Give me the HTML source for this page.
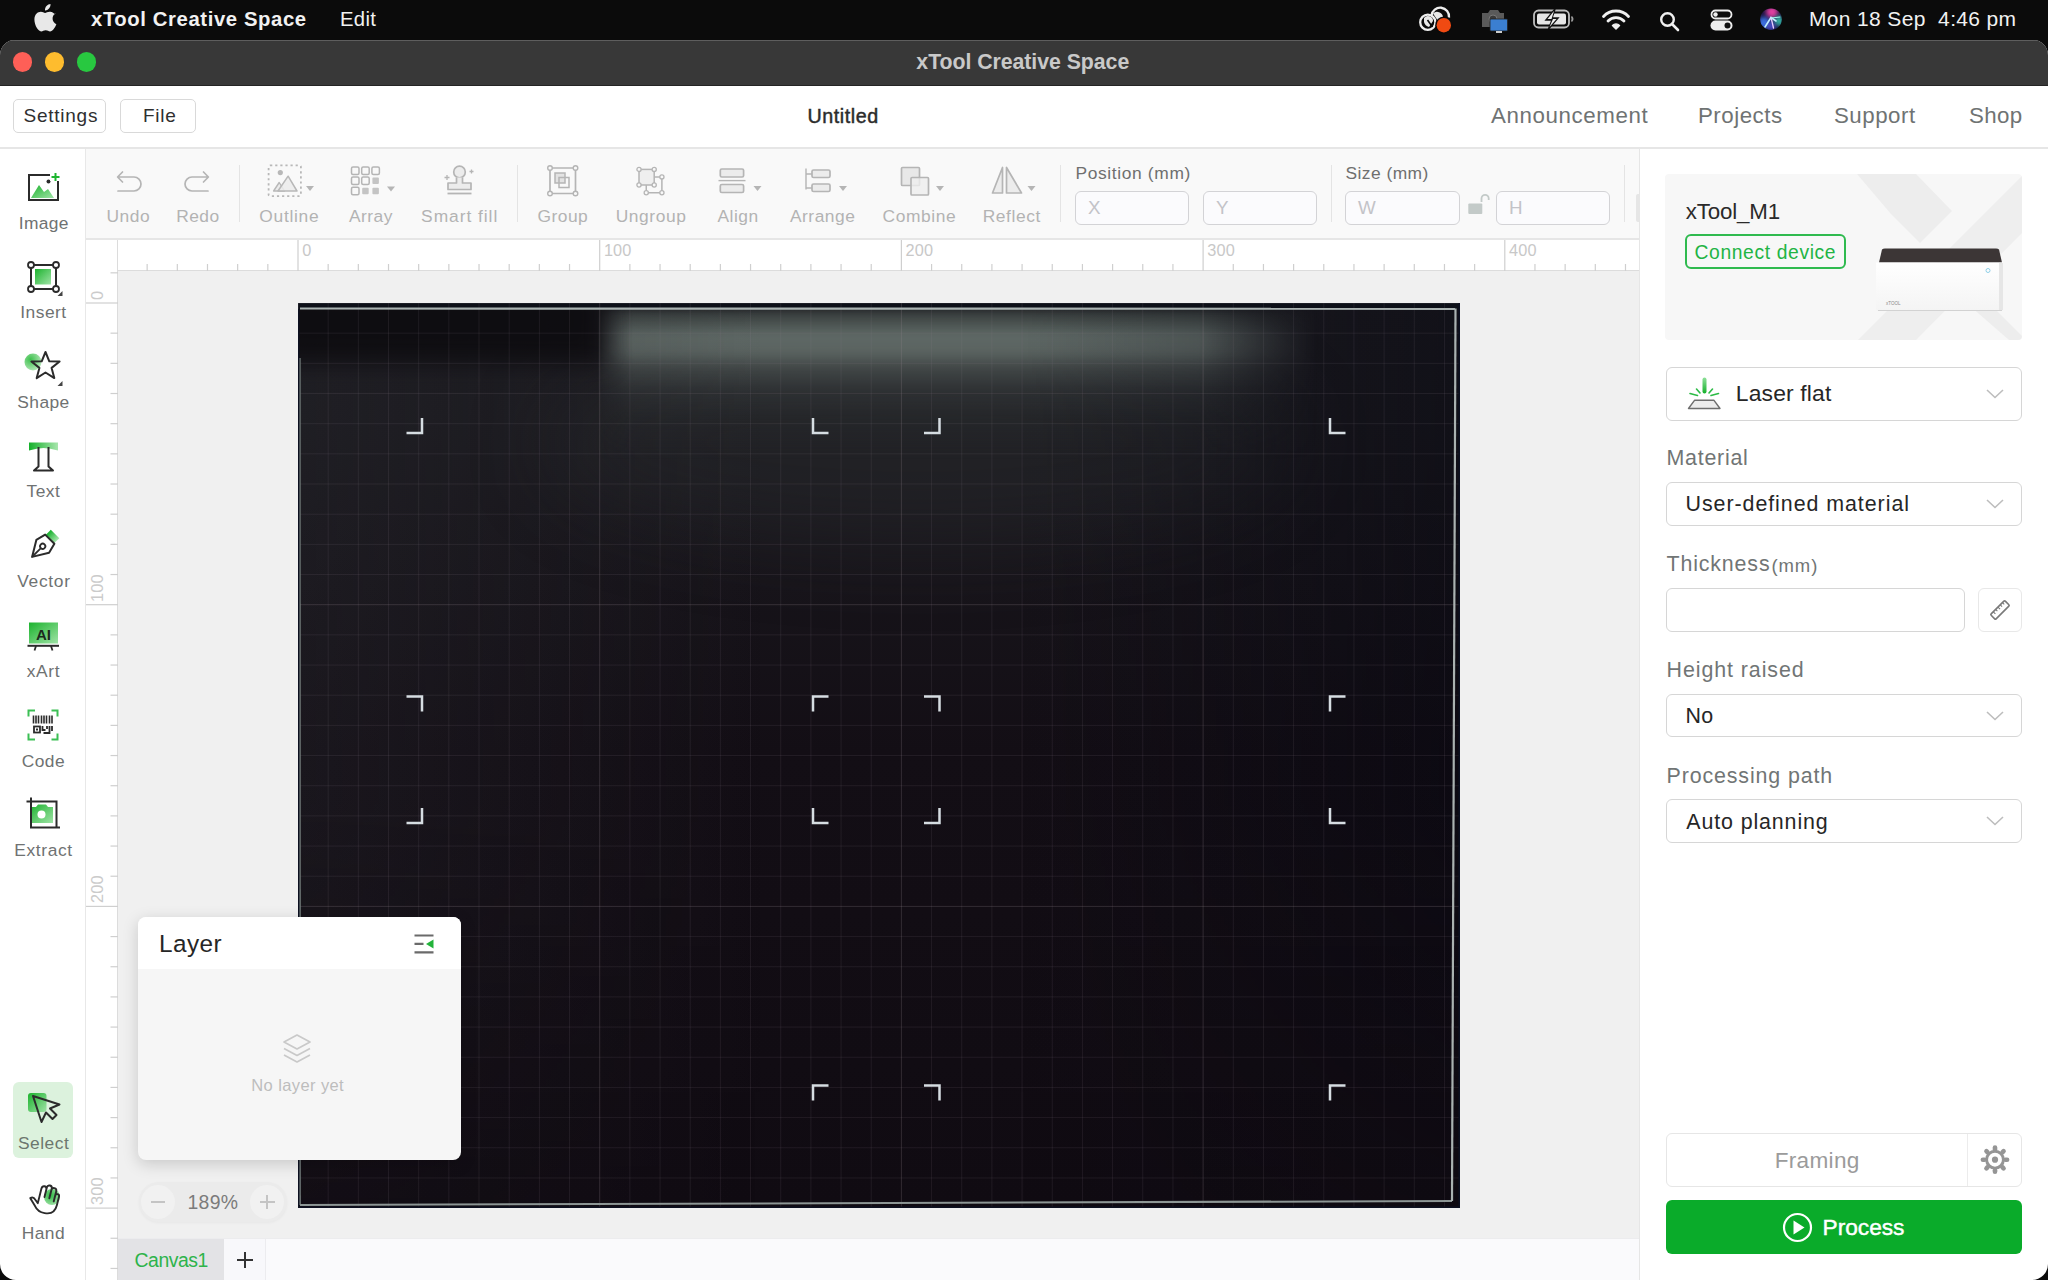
<!DOCTYPE html><html><head><meta charset="utf-8"><style>
html,body{margin:0;padding:0;}
body{width:2048px;height:1280px;overflow:hidden;position:relative;background:#0b0b0b;font-family:"Liberation Sans",sans-serif;}
.t{position:absolute;line-height:1;white-space:nowrap;font-family:"Liberation Sans",sans-serif;}
svg{overflow:visible}
</style></head><body>
<div style="position:absolute;left:0px;top:0px;width:2048px;height:40px;background:#0b0b0b"></div>
<svg style="position:absolute;left:34px;top:4px;" width="22" height="27" viewBox="0 0 22 27"><path fill="#e8e8e8" d="M15.5 0c.2 1.8-.5 3.4-1.5 4.5-1 1.2-2.6 2-4 1.9-.2-1.7.6-3.4 1.5-4.4C12.5.9 14.2.1 15.5 0zM20.6 9.3c-.1.1-3 1.7-3 5.3 0 4.1 3.6 5.6 3.7 5.6 0 .1-.6 2-1.9 3.9-1.1 1.6-2.3 3.3-4.2 3.3s-2.3-1.1-4.5-1.1c-2.1 0-2.8 1.1-4.5 1.1-1.8 0-3.1-1.7-4.3-3.4C.5 21.9-.6 18.6-.6 15.5c0-5 3.3-7.700 6.500-7.700 1.700 0 3.100 1.100 4.200 1.100 1 0 2.600-1.200 4.600-1.200.700 0 3.400.100 5.100 2.600z" transform="translate(1,0)"/></svg>
<div class="t" style="left:91.0px;top:9.2px;font-size:20.3px;color:#f2f2f2;font-weight:bold;letter-spacing:0.6px;">xTool Creative Space</div>
<div class="t" style="left:340.0px;top:9.2px;font-size:20.3px;color:#f2f2f2;font-weight:normal;letter-spacing:0.3px;">Edit</div>
<div class="t" style="left:1809.0px;top:7.5px;font-size:21px;color:#f2f2f2;font-weight:normal;letter-spacing:0.35px;">Mon 18 Sep&nbsp;&nbsp;4:46 pm</div>
<div style="position:absolute;left:0;top:40px;width:2048px;height:1240px;border-radius:15px;overflow:hidden;background:#fff">
<div style="position:absolute;left:0px;top:0px;width:2048px;height:46px;background:#383838;box-shadow:inset 0 1px 0 #5e5e5e"></div>
<div style="position:absolute;left:0px;top:45px;width:2048px;height:1px;background:#242424"></div>
</div>
<div style="position:absolute;left:12.6px;top:52.3px;width:19.4px;height:19.4px;border-radius:50%;background:#fe5f57"></div>
<div style="position:absolute;left:44.6px;top:52.3px;width:19.4px;height:19.4px;border-radius:50%;background:#febc2e"></div>
<div style="position:absolute;left:76.6px;top:52.3px;width:19.4px;height:19.4px;border-radius:50%;background:#28c840"></div>
<div class="t" style="left:822.8px;width:400px;text-align:center;top:52.4px;font-size:21.3px;color:#c9c9c9;font-weight:bold;letter-spacing:-0.05px;text-indent:-0.05px;">xTool Creative Space</div>
<div style="position:absolute;left:13px;top:99px;width:93px;height:34px;box-sizing:border-box;border:1px solid #d9d9d9;border-radius:5px;background:#fff"></div>
<div class="t" style="left:23.5px;top:105.8px;font-size:19px;color:#2f2f2f;font-weight:normal;letter-spacing:0.75px;">Settings</div>
<div style="position:absolute;left:120px;top:99px;width:76px;height:34px;box-sizing:border-box;border:1px solid #d9d9d9;border-radius:5px;background:#fff"></div>
<div class="t" style="left:143.0px;top:105.8px;font-size:19px;color:#2f2f2f;font-weight:normal;letter-spacing:0.75px;">File</div>
<div class="t" style="left:807.5px;top:106.6px;font-size:19.7px;color:#2b2b2b;font-weight:normal;letter-spacing:0.55px;-webkit-text-stroke:0.45px #2b2b2b;">Untitled</div>
<div class="t" style="left:1491.0px;top:105.0px;font-size:22.3px;color:#6f7373;font-weight:normal;letter-spacing:0.6px;">Announcement</div>
<div class="t" style="left:1698.0px;top:105.0px;font-size:22.3px;color:#6f7373;font-weight:normal;letter-spacing:0.5px;">Projects</div>
<div class="t" style="left:1834.0px;top:105.0px;font-size:22.3px;color:#6f7373;font-weight:normal;letter-spacing:0.5px;">Support</div>
<div class="t" style="left:1969.0px;top:105.0px;font-size:22.3px;color:#6f7373;font-weight:normal;letter-spacing:0.4px;">Shop</div>
<div style="position:absolute;left:0px;top:147px;width:2048px;height:2px;background:#e6e6e6"></div>
<div style="position:absolute;left:0px;top:149px;width:85px;height:1131px;background:#fff"></div>
<div style="position:absolute;left:85px;top:149px;width:1px;height:1131px;background:#e8e8e8"></div>
<div style="position:absolute;left:13px;top:1082px;width:60px;height:76px;background:#dcf2dd;border-radius:6px"></div>
<div class="t" style="left:3.6px;width:80px;text-align:center;top:214.5px;font-size:17.4px;color:#6f7272;font-weight:normal;letter-spacing:0.35px;text-indent:0.35px;">Image</div>
<div class="t" style="left:3.2px;width:80px;text-align:center;top:304.1px;font-size:17.4px;color:#6f7272;font-weight:normal;letter-spacing:0.5px;text-indent:0.5px;">Insert</div>
<div class="t" style="left:3.3px;width:80px;text-align:center;top:393.9px;font-size:17.4px;color:#6f7272;font-weight:normal;letter-spacing:0.4px;text-indent:0.4px;">Shape</div>
<div class="t" style="left:3.2px;width:80px;text-align:center;top:483.2px;font-size:17.4px;color:#6f7272;font-weight:normal;letter-spacing:0.5px;text-indent:0.5px;">Text</div>
<div class="t" style="left:3.6px;width:80px;text-align:center;top:573.2px;font-size:17.4px;color:#6f7272;font-weight:normal;letter-spacing:0.7px;text-indent:0.7px;">Vector</div>
<div class="t" style="left:3.2px;width:80px;text-align:center;top:662.5px;font-size:17.4px;color:#6f7272;font-weight:normal;letter-spacing:0.6px;text-indent:0.6px;">xArt</div>
<div class="t" style="left:3.2px;width:80px;text-align:center;top:752.5px;font-size:17.4px;color:#6f7272;font-weight:normal;letter-spacing:0.5px;text-indent:0.5px;">Code</div>
<div class="t" style="left:3.2px;width:80px;text-align:center;top:841.8px;font-size:17.4px;color:#6f7272;font-weight:normal;letter-spacing:0.6px;text-indent:0.6px;">Extract</div>
<div class="t" style="left:3.3px;width:80px;text-align:center;top:1134.5px;font-size:17.4px;color:#6c776e;font-weight:normal;letter-spacing:0.5px;text-indent:0.5px;">Select</div>
<div class="t" style="left:3.2px;width:80px;text-align:center;top:1224.5px;font-size:17.4px;color:#6f7272;font-weight:normal;letter-spacing:0.4px;text-indent:0.4px;">Hand</div>
<svg style="position:absolute;left:25px;top:170px;" width="40" height="34" viewBox="0 0 40 34"><defs><linearGradient id="g1" x1="0" y1="0" x2="1" y2="1"><stop offset="0" stop-color="#1cb32e"/><stop offset="1" stop-color="#9fe3a6"/></linearGradient><linearGradient id="g2" x1="0" y1="0" x2="1" y2="0"><stop offset="0" stop-color="#14b02a"/><stop offset="1" stop-color="#a8e6ad"/></linearGradient></defs><path d="M6 28 L14 15 L19 22 L23 19 L29 28 Z" fill="url(#g1)"/><rect x="4" y="5" width="29" height="25" fill="none" stroke="#2b2b2b" stroke-width="2"/><circle cx="23.5" cy="11.5" r="2" fill="#2b2b2b"/><rect x="25" y="1" width="12" height="10" fill="#fff"/><path d="M30.5 3v8M26.5 7h8" stroke="#1db52f" stroke-width="2"/></svg>
<svg style="position:absolute;left:25px;top:259px;" width="40" height="40" viewBox="0 0 40 40"><defs><linearGradient id="g1" x1="0" y1="0" x2="1" y2="1"><stop offset="0" stop-color="#1cb32e"/><stop offset="1" stop-color="#9fe3a6"/></linearGradient><linearGradient id="g2" x1="0" y1="0" x2="1" y2="0"><stop offset="0" stop-color="#14b02a"/><stop offset="1" stop-color="#a8e6ad"/></linearGradient></defs><rect x="10" y="10" width="16" height="15.5" fill="url(#g1)"/><rect x="6" y="6" width="25" height="24" fill="none" stroke="#2b2b2b" stroke-width="2"/><circle cx="6" cy="6" r="3" fill="#fff" stroke="#2b2b2b" stroke-width="1.8"/><circle cx="31" cy="6" r="3" fill="#fff" stroke="#2b2b2b" stroke-width="1.8"/><circle cx="6" cy="30" r="3" fill="#fff" stroke="#2b2b2b" stroke-width="1.8"/><circle cx="31" cy="30" r="3" fill="#fff" stroke="#2b2b2b" stroke-width="1.8"/><path d="M37.5 32 L37.5 37 L32.5 37 Z" fill="#444"/></svg>
<svg style="position:absolute;left:22px;top:348px;" width="44" height="40" viewBox="0 0 44 40"><defs><radialGradient id="g3" cx="0.35" cy="0.35" r="0.7"><stop offset="0" stop-color="#3cc04c"/><stop offset="1" stop-color="#b5e8b9"/></radialGradient></defs><circle cx="11" cy="14" r="8.5" fill="url(#g3)"/><path d="M23.5 4 L27.3 13.3 L37.6 13.5 L29.6 19.9 L32.3 30.1 L23.5 24.5 L14.7 30.1 L17.4 19.9 L9.4 13.5 L19.7 13.3 Z" fill="none" stroke="#2b2b2b" stroke-width="2" stroke-linejoin="round"/><path d="M40.5 33 L40.5 38 L35.5 38 Z" fill="#444"/></svg>
<svg style="position:absolute;left:26px;top:440px;" width="34" height="34" viewBox="0 0 34 34"><defs><linearGradient id="g1" x1="0" y1="0" x2="1" y2="1"><stop offset="0" stop-color="#1cb32e"/><stop offset="1" stop-color="#9fe3a6"/></linearGradient><linearGradient id="g2" x1="0" y1="0" x2="1" y2="0"><stop offset="0" stop-color="#14b02a"/><stop offset="1" stop-color="#a8e6ad"/></linearGradient></defs><path d="M3 2.5 H32 V10.5 Q24 8 17.5 8 Q11 8 3 10.5 Z" fill="url(#g2)"/><path d="M12.5 7 V26.5 L8 30.5 H27 L22.5 26.5 V7" fill="none" stroke="#2b2b2b" stroke-width="2" stroke-linejoin="round"/></svg>
<svg style="position:absolute;left:24.5px;top:529.5px;" width="34" height="34" viewBox="0 0 34 34"><defs><linearGradient id="g1" x1="0" y1="0" x2="1" y2="1"><stop offset="0" stop-color="#1cb32e"/><stop offset="1" stop-color="#9fe3a6"/></linearGradient><linearGradient id="g2" x1="0" y1="0" x2="1" y2="0"><stop offset="0" stop-color="#14b02a"/><stop offset="1" stop-color="#a8e6ad"/></linearGradient></defs><g transform="rotate(45 17 17)"><rect x="11" y="-1.5" width="12" height="7" fill="url(#g2)"/><path d="M10.5 6 L23.5 6 L26 16 L17 31 L8 16 Z" fill="none" stroke="#2b2b2b" stroke-width="2" stroke-linejoin="round"/><circle cx="17" cy="16" r="2.6" fill="#fff" stroke="#2b2b2b" stroke-width="1.8"/><path d="M17 18.6 V31" stroke="#2b2b2b" stroke-width="1.8"/></g></svg>
<svg style="position:absolute;left:26px;top:620px;" width="36" height="34" viewBox="0 0 36 34"><defs><linearGradient id="g1" x1="0" y1="0" x2="1" y2="1"><stop offset="0" stop-color="#1cb32e"/><stop offset="1" stop-color="#9fe3a6"/></linearGradient><linearGradient id="g2" x1="0" y1="0" x2="1" y2="0"><stop offset="0" stop-color="#14b02a"/><stop offset="1" stop-color="#a8e6ad"/></linearGradient></defs><rect x="3" y="2.5" width="29" height="21" fill="url(#g1)"/><text x="17.5" y="19.5" text-anchor="middle" font-family="Liberation Sans" font-weight="bold" font-size="15" fill="#1d2a1d">AI</text><path d="M1.5 25.8 H33" stroke="#2b2b2b" stroke-width="2"/><path d="M10 26 L8.5 30.5 M25 26 L26.5 30.5" stroke="#2b2b2b" stroke-width="1.8"/></svg>
<svg style="position:absolute;left:26px;top:708px;" width="34" height="34" viewBox="0 0 34 34"><path d="M2.5 8.5 V2.5 H9 M25.5 2.5 H31.5 V8.5 M31.5 25.5 V31.5 H25.5 M9 31.5 H2.5 V25.5" fill="none" stroke="#3cbf55" stroke-width="2"/><path d="M7.5 7.5 V15.5 M10 7.5 V15.5 M12.5 7.5 V15.5 M15.5 7.5 V15.5 M18 7.5 V15.5 M20.5 7.5 V15.5 M23.5 7.5 V15.5 M26 7.5 V15.5" stroke="#2b2b2b" stroke-width="1.6"/><rect x="8" y="18.5" width="6" height="6" fill="none" stroke="#2b2b2b" stroke-width="1.8"/><rect x="10" y="20.5" width="2" height="2" fill="#2b2b2b"/><path d="M16.5 18 V22 H19.5 M21 18 V21 M23.5 18 V25 H17.5 M26 18 V23" fill="none" stroke="#2b2b2b" stroke-width="1.8"/></svg>
<svg style="position:absolute;left:24px;top:795px;" width="38" height="38" viewBox="0 0 38 38"><defs><linearGradient id="g1" x1="0" y1="0" x2="1" y2="1"><stop offset="0" stop-color="#1cb32e"/><stop offset="1" stop-color="#9fe3a6"/></linearGradient><linearGradient id="g2" x1="0" y1="0" x2="1" y2="0"><stop offset="0" stop-color="#14b02a"/><stop offset="1" stop-color="#a8e6ad"/></linearGradient></defs><path d="M6 12 H12 L14 9.5 H22 L24 12 H29 V28 H6 Z" fill="url(#g1)"/><circle cx="17.5" cy="19.5" r="4" fill="#fff"/><path d="M2.5 6.5 H32.5 V31.5 M7 2.5 V32.5 H36" fill="none" stroke="#2b2b2b" stroke-width="2"/></svg>
<svg style="position:absolute;left:26px;top:1091px;" width="38" height="36" viewBox="0 0 38 36"><defs><linearGradient id="g1" x1="0" y1="0" x2="1" y2="1"><stop offset="0" stop-color="#1cb32e"/><stop offset="1" stop-color="#9fe3a6"/></linearGradient><linearGradient id="g2" x1="0" y1="0" x2="1" y2="0"><stop offset="0" stop-color="#14b02a"/><stop offset="1" stop-color="#a8e6ad"/></linearGradient></defs><rect x="2" y="2" width="18.5" height="19" rx="3" fill="url(#g1)"/><path d="M7 5 L33.5 13.5 L24 17.5 L30.5 24 L26.5 28 L20 21.5 L15.5 31 Z" fill="none" stroke="#2b2b2b" stroke-width="2" stroke-linejoin="round"/></svg>
<svg style="position:absolute;left:26px;top:1181.5px;" width="36" height="34" viewBox="0 0 36 34"><defs><radialGradient id="g4" cx="0.4" cy="0.4" r="0.7"><stop offset="0" stop-color="#2fbb44"/><stop offset="1" stop-color="#a9e4ae"/></radialGradient></defs><circle cx="26" cy="15" r="8" fill="url(#g4)"/><path transform="rotate(14 18 17)" d="M4.5 19.5 Q7 17 10 20 L13 22.5 V7.5 Q13 4.5 15.5 4.5 Q18 4.5 18 7.5 V15 V5 Q18 2.5 20.5 2.5 Q23 2.5 23 5 V15 V6.5 Q23 4 25.5 4 Q28 4 28 6.5 V17 V11 Q28 9 30 9 Q32 9 32 11 V20 Q32 30 22 30.5 Q15 31 11 26 Z" fill="none" stroke="#2b2b2b" stroke-width="1.9" stroke-linejoin="round"/></svg>
<div style="position:absolute;left:86px;top:149px;width:1553px;height:90px;background:#f9f9f9"></div>
<div style="position:absolute;left:86px;top:238px;width:1553px;height:2px;background:#e6e6e6"></div>
<div class="t" style="left:68.1px;width:120px;text-align:center;top:208.2px;font-size:17.4px;color:#b3b3b3;font-weight:normal;letter-spacing:0.6px;text-indent:0.6px;">Undo</div>
<div class="t" style="left:137.7px;width:120px;text-align:center;top:208.2px;font-size:17.4px;color:#b3b3b3;font-weight:normal;letter-spacing:0.5px;text-indent:0.5px;">Redo</div>
<div class="t" style="left:229.0px;width:120px;text-align:center;top:208.2px;font-size:17.4px;color:#b3b3b3;font-weight:normal;letter-spacing:0.7px;text-indent:0.7px;">Outline</div>
<div class="t" style="left:310.7px;width:120px;text-align:center;top:208.2px;font-size:17.4px;color:#b3b3b3;font-weight:normal;letter-spacing:0.5px;text-indent:0.5px;">Array</div>
<div class="t" style="left:399.2px;width:120px;text-align:center;top:208.2px;font-size:17.4px;color:#b3b3b3;font-weight:normal;letter-spacing:0.95px;text-indent:0.95px;">Smart fill</div>
<div class="t" style="left:502.6px;width:120px;text-align:center;top:208.2px;font-size:17.4px;color:#b3b3b3;font-weight:normal;letter-spacing:0.5px;text-indent:0.5px;">Group</div>
<div class="t" style="left:590.8px;width:120px;text-align:center;top:208.2px;font-size:17.4px;color:#b3b3b3;font-weight:normal;letter-spacing:0.6px;text-indent:0.6px;">Ungroup</div>
<div class="t" style="left:677.8px;width:120px;text-align:center;top:208.2px;font-size:17.4px;color:#b3b3b3;font-weight:normal;letter-spacing:0.5px;text-indent:0.5px;">Align</div>
<div class="t" style="left:762.4px;width:120px;text-align:center;top:208.2px;font-size:17.4px;color:#b3b3b3;font-weight:normal;letter-spacing:0.5px;text-indent:0.5px;">Arrange</div>
<div class="t" style="left:859.1px;width:120px;text-align:center;top:208.2px;font-size:17.4px;color:#b3b3b3;font-weight:normal;letter-spacing:0.6px;text-indent:0.6px;">Combine</div>
<div class="t" style="left:951.5px;width:120px;text-align:center;top:208.2px;font-size:17.4px;color:#b3b3b3;font-weight:normal;letter-spacing:0.6px;text-indent:0.6px;">Reflect</div>
<div style="position:absolute;left:239px;top:165px;width:1px;height:57px;background:#e4e4e4"></div>
<div style="position:absolute;left:517px;top:165px;width:1px;height:57px;background:#e4e4e4"></div>
<div style="position:absolute;left:1060px;top:165px;width:1px;height:57px;background:#e4e4e4"></div>
<div style="position:absolute;left:1331px;top:165px;width:1px;height:57px;background:#e4e4e4"></div>
<div style="position:absolute;left:1624px;top:165px;width:1px;height:57px;background:#e4e4e4"></div>
<svg style="position:absolute;left:114px;top:166px;" width="32" height="30" viewBox="0 0 32 30"><path d="M4 11 H20 A7 7 0 0 1 20 25 H4 M8.5 6 L3.6 11 L8.5 16" fill="none" stroke="#b5b5b5" stroke-width="1.7" stroke-linecap="round" stroke-linejoin="round"/></svg>
<svg style="position:absolute;left:182px;top:166px;" width="32" height="30" viewBox="0 0 32 30"><path d="M26 11 H10 A7 7 0 0 0 10 25 H26 M21.5 6 L26.4 11 L21.5 16" fill="none" stroke="#b5b5b5" stroke-width="1.7" stroke-linecap="round" stroke-linejoin="round"/></svg>
<svg style="position:absolute;left:264px;top:161px;" width="54" height="40" viewBox="0 0 54 40"><rect x="4.6" y="4.4" width="32.3" height="30.8" rx="1.5" fill="none" stroke="#b8b8b8" stroke-width="1.8" stroke-dasharray="2.2 2.9"/><circle cx="16.3" cy="11.6" r="2.6" fill="#b8b8b8"/><path d="M9.6 30 L15.2 21.5 L20.5 30 Z" fill="#ececec" stroke="#b8b8b8" stroke-width="1.4" stroke-linejoin="round"/><path d="M14 30 L24.1 15.2 L33 30 Z" fill="#ececec" fill-opacity="0.85" stroke="#b8b8b8" stroke-width="1.5" stroke-linejoin="round"/><path d="M42 25 h8 l-4 5 z" fill="#b5b5b5"/></svg>
<svg style="position:absolute;left:346px;top:162px;" width="54" height="38" viewBox="0 0 54 38"><rect x="5.5" y="5.0" width="7.5" height="7.5" rx="1.5" fill="none" stroke="#b5b5b5" stroke-width="1.5"/><rect x="5.5" y="15.1" width="7.5" height="7.5" rx="1.5" fill="none" stroke="#b5b5b5" stroke-width="1.5"/><rect x="5.5" y="25.2" width="7.5" height="7.5" rx="1.5" fill="none" stroke="#b5b5b5" stroke-width="1.5"/><rect x="15.7" y="5.0" width="7.5" height="7.5" rx="1.5" fill="none" stroke="#b5b5b5" stroke-width="1.5"/><rect x="15.7" y="15.1" width="7.5" height="7.5" rx="1.5" fill="none" stroke="#b5b5b5" stroke-width="1.5"/><rect x="16.2" y="25.7" width="6.5" height="6.5" rx="1" fill="#c4c4c4"/><rect x="25.9" y="5.0" width="7.5" height="7.5" rx="1.5" fill="none" stroke="#b5b5b5" stroke-width="1.5"/><rect x="26.4" y="15.6" width="6.5" height="6.5" rx="1" fill="#c4c4c4"/><rect x="26.4" y="25.7" width="6.5" height="6.5" rx="1" fill="#c4c4c4"/><path d="M41 24.5 h8 l-4 5 z" fill="#b5b5b5"/></svg>
<svg style="position:absolute;left:440px;top:162px;" width="40" height="38" viewBox="0 0 40 38"><circle cx="19.5" cy="10" r="5.8" fill="#ececec" stroke="#b5b5b5" stroke-width="1.7"/><path d="M16.5 15.5 V21 H8 V27.5 H31 V21 H22.5 V15.5" fill="#ececec" stroke="#b5b5b5" stroke-width="1.7" stroke-linejoin="round"/><path d="M7.5 31.5 H31.5" stroke="#b5b5b5" stroke-width="1.8"/><path d="M7 13 v5 M4.5 15.5 h5 M31.5 7.5 v4 M29.5 9.5 h4" stroke="#b5b5b5" stroke-width="1.3"/></svg>
<svg style="position:absolute;left:544px;top:162px;" width="38" height="38" viewBox="0 0 38 38"><rect x="6" y="6" width="25.5" height="25.5" fill="none" stroke="#b5b5b5" stroke-width="1.7" stroke-linecap="round" stroke-linejoin="round" stroke-width="1.5"/><rect x="11" y="11" width="10" height="10" fill="#e3e3e3" stroke="#b5b5b5" stroke-width="1.5"/><rect x="15" y="15.5" width="10" height="10" fill="none" stroke="#b5b5b5" stroke-width="1.5"/><circle cx="6" cy="6" r="2.3" fill="#f9f9f9" stroke="#b5b5b5" stroke-width="1.4"/><circle cx="6" cy="31.5" r="2.3" fill="#f9f9f9" stroke="#b5b5b5" stroke-width="1.4"/><circle cx="31.5" cy="6" r="2.3" fill="#f9f9f9" stroke="#b5b5b5" stroke-width="1.4"/><circle cx="31.5" cy="31.5" r="2.3" fill="#f9f9f9" stroke="#b5b5b5" stroke-width="1.4"/></svg>
<svg style="position:absolute;left:633px;top:163px;" width="36" height="36" viewBox="0 0 36 36"><rect x="6" y="6.4" width="15.2" height="15.6" fill="#efefef" stroke="#b5b5b5" stroke-width="1.5"/><path d="M21.2 13.9 H28.9 V29.7 H13.25 V22" fill="none" stroke="#b5b5b5" stroke-width="1.5"/><circle cx="6" cy="6.4" r="2.1" fill="#f9f9f9" stroke="#b5b5b5" stroke-width="1.3"/><circle cx="21.2" cy="6.4" r="2.1" fill="#f9f9f9" stroke="#b5b5b5" stroke-width="1.3"/><circle cx="6" cy="22" r="2.1" fill="#f9f9f9" stroke="#b5b5b5" stroke-width="1.3"/><circle cx="21.2" cy="22" r="2.1" fill="#f9f9f9" stroke="#b5b5b5" stroke-width="1.3"/><circle cx="28.9" cy="13.9" r="2.1" fill="#f9f9f9" stroke="#b5b5b5" stroke-width="1.3"/><circle cx="13.25" cy="29.7" r="2.1" fill="#f9f9f9" stroke="#b5b5b5" stroke-width="1.3"/><circle cx="28.9" cy="29.7" r="2.1" fill="#f9f9f9" stroke="#b5b5b5" stroke-width="1.3"/></svg>
<svg style="position:absolute;left:714px;top:163px;" width="52" height="34" viewBox="0 0 52 34"><rect x="6.3" y="6" width="23.3" height="8" rx="1.5" fill="#ececec" stroke="#b5b5b5" stroke-width="1.7"/><rect x="6.3" y="21.5" width="23.3" height="8" rx="1.5" fill="#ececec" stroke="#b5b5b5" stroke-width="1.7"/><path d="M4.5 17.6 H31.5" stroke="#b5b5b5" stroke-width="1.4"/><path d="M39.5 23 h8 l-4 5 z" fill="#b5b5b5"/></svg>
<svg style="position:absolute;left:801px;top:163px;" width="52" height="34" viewBox="0 0 52 34"><path d="M5 5.5 V26.5 M5 11 H11 M5 25 H11" fill="none" stroke="#b5b5b5" stroke-width="1.4"/><rect x="11" y="7" width="18" height="7.5" rx="1.5" fill="#ececec" stroke="#b5b5b5" stroke-width="1.7"/><rect x="11" y="21" width="18" height="7.5" rx="1.5" fill="#ececec" stroke="#b5b5b5" stroke-width="1.7"/><path d="M38 23 h8 l-4 5 z" fill="#b5b5b5"/></svg>
<svg style="position:absolute;left:896px;top:162px;" width="52" height="38" viewBox="0 0 52 38"><rect x="5.5" y="5.5" width="18" height="18" rx="1" fill="#e8e8e8" stroke="#b5b5b5" stroke-width="1.7"/><rect x="15" y="15.5" width="17.5" height="17.5" rx="1" fill="#ededed" fill-opacity="0.8" stroke="#b5b5b5" stroke-width="1.7"/><path d="M40 24 h8 l-4 5 z" fill="#b5b5b5"/></svg>
<svg style="position:absolute;left:987px;top:162px;" width="52" height="36" viewBox="0 0 52 36"><path d="M15.5 5.5 V31 H5.5 Z" fill="#ececec" stroke="#b5b5b5" stroke-width="1.7" stroke-linejoin="round"/><path d="M19.5 5.5 V31 H34.5 Z" fill="#ececec" stroke="#b5b5b5" stroke-width="1.7" stroke-linejoin="round"/><path d="M40.5 24 h8 l-4 5 z" fill="#b5b5b5"/></svg>
<div class="t" style="left:1075.5px;top:165.2px;font-size:17.4px;color:#6f6f6f;font-weight:normal;letter-spacing:0.63px;">Position (mm)</div>
<div class="t" style="left:1345.5px;top:165.2px;font-size:17.4px;color:#6f6f6f;font-weight:normal;letter-spacing:0.45px;">Size (mm)</div>
<div style="position:absolute;left:1075px;top:191px;width:114px;height:34px;box-sizing:border-box;border:1px solid #d3d3d6;border-radius:6px;background:#fbfbfd"></div>
<div class="t" style="left:1088.0px;top:199.0px;font-size:18.8px;color:#c3c3c8;font-weight:normal;letter-spacing:0px;">X</div>
<div style="position:absolute;left:1203px;top:191px;width:114px;height:34px;box-sizing:border-box;border:1px solid #d3d3d6;border-radius:6px;background:#fbfbfd"></div>
<div class="t" style="left:1216.0px;top:199.0px;font-size:18.8px;color:#c3c3c8;font-weight:normal;letter-spacing:0px;">Y</div>
<div style="position:absolute;left:1345px;top:191px;width:115px;height:34px;box-sizing:border-box;border:1px solid #d3d3d6;border-radius:6px;background:#fbfbfd"></div>
<div class="t" style="left:1358.0px;top:199.0px;font-size:18.8px;color:#c3c3c8;font-weight:normal;letter-spacing:0px;">W</div>
<div style="position:absolute;left:1496px;top:191px;width:114px;height:34px;box-sizing:border-box;border:1px solid #d3d3d6;border-radius:6px;background:#fbfbfd"></div>
<div class="t" style="left:1509.0px;top:199.0px;font-size:18.8px;color:#c3c3c8;font-weight:normal;letter-spacing:0px;">H</div>
<svg style="position:absolute;left:1466px;top:192px;" width="24" height="24" viewBox="0 0 24 24"><path d="M15.5 10 V6.5 A3.6 3.6 0 0 1 22.7 6.5 V8" fill="none" stroke="#c3cac8" stroke-width="1.8"/><rect x="2.3" y="11.5" width="14" height="10.5" rx="1" fill="#c3cac8"/></svg>
<div style="position:absolute;left:1636px;top:194px;width:3px;height:28px;background:#e6e6e6;border-radius:2px 0 0 2px"></div>
<div style="position:absolute;left:86px;top:240px;width:1553px;height:31px;background:#fff"></div>
<div style="position:absolute;left:86px;top:271px;width:32px;height:1009px;background:#fff"></div>
<div style="position:absolute;left:118px;top:270px;width:1521px;height:1px;background:#dcdcdc"></div>
<div style="position:absolute;left:117px;top:240px;width:1px;height:1040px;background:#dcdcdc"></div>
<svg style="position:absolute;left:0px;top:240px;" width="1639" height="31" viewBox="0 0 1639 31"><path d="M147.15 24 V31" stroke="#cfcfcf" stroke-width="1.2"/><path d="M177.32 24 V31" stroke="#cfcfcf" stroke-width="1.2"/><path d="M207.49 24 V31" stroke="#cfcfcf" stroke-width="1.2"/><path d="M237.66 24 V31" stroke="#cfcfcf" stroke-width="1.2"/><path d="M267.83 24 V31" stroke="#cfcfcf" stroke-width="1.2"/><path d="M298.00 0 V31" stroke="#cfcfcf" stroke-width="1.2"/><path d="M328.17 24 V31" stroke="#cfcfcf" stroke-width="1.2"/><path d="M358.34 24 V31" stroke="#cfcfcf" stroke-width="1.2"/><path d="M388.51 24 V31" stroke="#cfcfcf" stroke-width="1.2"/><path d="M418.68 24 V31" stroke="#cfcfcf" stroke-width="1.2"/><path d="M448.85 24 V31" stroke="#cfcfcf" stroke-width="1.2"/><path d="M479.02 24 V31" stroke="#cfcfcf" stroke-width="1.2"/><path d="M509.19 24 V31" stroke="#cfcfcf" stroke-width="1.2"/><path d="M539.36 24 V31" stroke="#cfcfcf" stroke-width="1.2"/><path d="M569.53 24 V31" stroke="#cfcfcf" stroke-width="1.2"/><path d="M599.70 0 V31" stroke="#cfcfcf" stroke-width="1.2"/><path d="M629.87 24 V31" stroke="#cfcfcf" stroke-width="1.2"/><path d="M660.04 24 V31" stroke="#cfcfcf" stroke-width="1.2"/><path d="M690.21 24 V31" stroke="#cfcfcf" stroke-width="1.2"/><path d="M720.38 24 V31" stroke="#cfcfcf" stroke-width="1.2"/><path d="M750.55 24 V31" stroke="#cfcfcf" stroke-width="1.2"/><path d="M780.72 24 V31" stroke="#cfcfcf" stroke-width="1.2"/><path d="M810.89 24 V31" stroke="#cfcfcf" stroke-width="1.2"/><path d="M841.06 24 V31" stroke="#cfcfcf" stroke-width="1.2"/><path d="M871.23 24 V31" stroke="#cfcfcf" stroke-width="1.2"/><path d="M901.40 0 V31" stroke="#cfcfcf" stroke-width="1.2"/><path d="M931.57 24 V31" stroke="#cfcfcf" stroke-width="1.2"/><path d="M961.74 24 V31" stroke="#cfcfcf" stroke-width="1.2"/><path d="M991.91 24 V31" stroke="#cfcfcf" stroke-width="1.2"/><path d="M1022.08 24 V31" stroke="#cfcfcf" stroke-width="1.2"/><path d="M1052.25 24 V31" stroke="#cfcfcf" stroke-width="1.2"/><path d="M1082.42 24 V31" stroke="#cfcfcf" stroke-width="1.2"/><path d="M1112.59 24 V31" stroke="#cfcfcf" stroke-width="1.2"/><path d="M1142.76 24 V31" stroke="#cfcfcf" stroke-width="1.2"/><path d="M1172.93 24 V31" stroke="#cfcfcf" stroke-width="1.2"/><path d="M1203.10 0 V31" stroke="#cfcfcf" stroke-width="1.2"/><path d="M1233.27 24 V31" stroke="#cfcfcf" stroke-width="1.2"/><path d="M1263.44 24 V31" stroke="#cfcfcf" stroke-width="1.2"/><path d="M1293.61 24 V31" stroke="#cfcfcf" stroke-width="1.2"/><path d="M1323.78 24 V31" stroke="#cfcfcf" stroke-width="1.2"/><path d="M1353.95 24 V31" stroke="#cfcfcf" stroke-width="1.2"/><path d="M1384.12 24 V31" stroke="#cfcfcf" stroke-width="1.2"/><path d="M1414.29 24 V31" stroke="#cfcfcf" stroke-width="1.2"/><path d="M1444.46 24 V31" stroke="#cfcfcf" stroke-width="1.2"/><path d="M1474.63 24 V31" stroke="#cfcfcf" stroke-width="1.2"/><path d="M1504.80 0 V31" stroke="#cfcfcf" stroke-width="1.2"/><path d="M1534.97 24 V31" stroke="#cfcfcf" stroke-width="1.2"/><path d="M1565.14 24 V31" stroke="#cfcfcf" stroke-width="1.2"/><path d="M1595.31 24 V31" stroke="#cfcfcf" stroke-width="1.2"/><path d="M1625.48 24 V31" stroke="#cfcfcf" stroke-width="1.2"/></svg>
<div class="t" style="left:302.2px;top:242.4px;font-size:16.3px;color:#c8c8c8;font-weight:normal;letter-spacing:0.15px;">0</div>
<div class="t" style="left:603.9px;top:242.4px;font-size:16.3px;color:#c8c8c8;font-weight:normal;letter-spacing:0.15px;">100</div>
<div class="t" style="left:905.6px;top:242.4px;font-size:16.3px;color:#c8c8c8;font-weight:normal;letter-spacing:0.15px;">200</div>
<div class="t" style="left:1207.3px;top:242.4px;font-size:16.3px;color:#c8c8c8;font-weight:normal;letter-spacing:0.15px;">300</div>
<div class="t" style="left:1509.0px;top:242.4px;font-size:16.3px;color:#c8c8c8;font-weight:normal;letter-spacing:0.15px;">400</div>
<svg style="position:absolute;left:86px;top:240px;" width="32" height="1040" viewBox="0 0 32 1040"><path d="M24.5 32.83 H32" stroke="#cfcfcf" stroke-width="1.2"/><path d="M0 63.00 H32" stroke="#cfcfcf" stroke-width="1.2"/><path d="M24.5 93.17 H32" stroke="#cfcfcf" stroke-width="1.2"/><path d="M24.5 123.34 H32" stroke="#cfcfcf" stroke-width="1.2"/><path d="M24.5 153.51 H32" stroke="#cfcfcf" stroke-width="1.2"/><path d="M24.5 183.68 H32" stroke="#cfcfcf" stroke-width="1.2"/><path d="M24.5 213.85 H32" stroke="#cfcfcf" stroke-width="1.2"/><path d="M24.5 244.02 H32" stroke="#cfcfcf" stroke-width="1.2"/><path d="M24.5 274.19 H32" stroke="#cfcfcf" stroke-width="1.2"/><path d="M24.5 304.36 H32" stroke="#cfcfcf" stroke-width="1.2"/><path d="M24.5 334.53 H32" stroke="#cfcfcf" stroke-width="1.2"/><path d="M0 364.70 H32" stroke="#cfcfcf" stroke-width="1.2"/><path d="M24.5 394.87 H32" stroke="#cfcfcf" stroke-width="1.2"/><path d="M24.5 425.04 H32" stroke="#cfcfcf" stroke-width="1.2"/><path d="M24.5 455.21 H32" stroke="#cfcfcf" stroke-width="1.2"/><path d="M24.5 485.38 H32" stroke="#cfcfcf" stroke-width="1.2"/><path d="M24.5 515.55 H32" stroke="#cfcfcf" stroke-width="1.2"/><path d="M24.5 545.72 H32" stroke="#cfcfcf" stroke-width="1.2"/><path d="M24.5 575.89 H32" stroke="#cfcfcf" stroke-width="1.2"/><path d="M24.5 606.06 H32" stroke="#cfcfcf" stroke-width="1.2"/><path d="M24.5 636.23 H32" stroke="#cfcfcf" stroke-width="1.2"/><path d="M0 666.40 H32" stroke="#cfcfcf" stroke-width="1.2"/><path d="M24.5 696.57 H32" stroke="#cfcfcf" stroke-width="1.2"/><path d="M24.5 726.74 H32" stroke="#cfcfcf" stroke-width="1.2"/><path d="M24.5 756.91 H32" stroke="#cfcfcf" stroke-width="1.2"/><path d="M24.5 787.08 H32" stroke="#cfcfcf" stroke-width="1.2"/><path d="M24.5 817.25 H32" stroke="#cfcfcf" stroke-width="1.2"/><path d="M24.5 847.42 H32" stroke="#cfcfcf" stroke-width="1.2"/><path d="M24.5 877.59 H32" stroke="#cfcfcf" stroke-width="1.2"/><path d="M24.5 907.76 H32" stroke="#cfcfcf" stroke-width="1.2"/><path d="M24.5 937.93 H32" stroke="#cfcfcf" stroke-width="1.2"/><path d="M0 968.10 H32" stroke="#cfcfcf" stroke-width="1.2"/><path d="M24.5 998.27 H32" stroke="#cfcfcf" stroke-width="1.2"/><path d="M24.5 1028.44 H32" stroke="#cfcfcf" stroke-width="1.2"/></svg>
<div class="t" style="left:97px;top:299.8px;font-size:16.3px;color:#cbcbcb;letter-spacing:0.15px;transform-origin:0 0;transform:rotate(-90deg);margin-left:-8.5px">0</div>
<div class="t" style="left:97px;top:601.5px;font-size:16.3px;color:#cbcbcb;letter-spacing:0.15px;transform-origin:0 0;transform:rotate(-90deg);margin-left:-8.5px">100</div>
<div class="t" style="left:97px;top:903.2px;font-size:16.3px;color:#cbcbcb;letter-spacing:0.15px;transform-origin:0 0;transform:rotate(-90deg);margin-left:-8.5px">200</div>
<div class="t" style="left:97px;top:1204.9px;font-size:16.3px;color:#cbcbcb;letter-spacing:0.15px;transform-origin:0 0;transform:rotate(-90deg);margin-left:-8.5px">300</div>
<div style="position:absolute;left:118px;top:271px;width:1521px;height:967px;background:#f0f0f0"></div>
<div style="position:absolute;left:298px;top:303px;width:1162px;height:905px;overflow:hidden;background:linear-gradient(180deg, #1c1b20 0px, #1b1a1f 120px, #17141a 280px, #130e15 450px, #110c13 760px, #100b12 905px)">
<div style="position:absolute;left:250px;top:40px;width:740px;height:200px;border-radius:50%;background:rgba(44,47,50,0.38);filter:blur(40px)"></div>
<div style="position:absolute;left:300px;top:6px;width:720px;height:150px;background:linear-gradient(180deg, rgba(64,72,70,0.5) 0px, rgba(84,94,90,0.7) 10px, rgba(100,111,107,0.92) 26px, rgba(98,108,104,0.9) 42px, rgba(80,88,86,0.68) 60px, rgba(62,68,68,0.45) 82px, rgba(48,52,53,0.25) 110px, rgba(40,44,46,0) 150px);-webkit-mask-image:linear-gradient(90deg, rgba(0,0,0,0.3) 0px, #000 35px, #000 600px, rgba(0,0,0,0.4) 670px, transparent 720px);filter:blur(3px)"></div>
<div style="position:absolute;left:0;top:0;width:1162px;height:905px;background:linear-gradient(90deg, rgba(40,40,46,0.35) 0%, rgba(0,0,0,0) 40%, rgba(0,0,0,0) 62%, rgba(6,6,16,0.45) 100%);-webkit-mask-image:linear-gradient(180deg, #000 0%, #000 55%, rgba(0,0,0,0.3) 100%)"></div>
<div style="position:absolute;left:-30px;top:-20px;width:335px;height:80px;background:rgba(12,10,14,0.85);filter:blur(12px)"></div>
<div style="position:absolute;left:0;top:0;width:1162px;height:6px;background:#0d1018"></div>
<svg style="position:absolute;left:0;top:0" width="1162" height="905"><path d="M0.00 0 V905" stroke="#948690" stroke-width="1" stroke-opacity="0.25"/><path d="M30.17 0 V905" stroke="#948690" stroke-width="1" stroke-opacity="0.13"/><path d="M60.34 0 V905" stroke="#948690" stroke-width="1" stroke-opacity="0.13"/><path d="M90.51 0 V905" stroke="#948690" stroke-width="1" stroke-opacity="0.13"/><path d="M120.68 0 V905" stroke="#948690" stroke-width="1" stroke-opacity="0.13"/><path d="M150.85 0 V905" stroke="#948690" stroke-width="1" stroke-opacity="0.13"/><path d="M181.02 0 V905" stroke="#948690" stroke-width="1" stroke-opacity="0.13"/><path d="M211.19 0 V905" stroke="#948690" stroke-width="1" stroke-opacity="0.13"/><path d="M241.36 0 V905" stroke="#948690" stroke-width="1" stroke-opacity="0.13"/><path d="M271.53 0 V905" stroke="#948690" stroke-width="1" stroke-opacity="0.13"/><path d="M301.70 0 V905" stroke="#948690" stroke-width="1" stroke-opacity="0.25"/><path d="M331.87 0 V905" stroke="#948690" stroke-width="1" stroke-opacity="0.13"/><path d="M362.04 0 V905" stroke="#948690" stroke-width="1" stroke-opacity="0.13"/><path d="M392.21 0 V905" stroke="#948690" stroke-width="1" stroke-opacity="0.13"/><path d="M422.38 0 V905" stroke="#948690" stroke-width="1" stroke-opacity="0.13"/><path d="M452.55 0 V905" stroke="#948690" stroke-width="1" stroke-opacity="0.13"/><path d="M482.72 0 V905" stroke="#948690" stroke-width="1" stroke-opacity="0.13"/><path d="M512.89 0 V905" stroke="#948690" stroke-width="1" stroke-opacity="0.13"/><path d="M543.06 0 V905" stroke="#948690" stroke-width="1" stroke-opacity="0.13"/><path d="M573.23 0 V905" stroke="#948690" stroke-width="1" stroke-opacity="0.13"/><path d="M603.40 0 V905" stroke="#948690" stroke-width="1" stroke-opacity="0.25"/><path d="M633.57 0 V905" stroke="#948690" stroke-width="1" stroke-opacity="0.13"/><path d="M663.74 0 V905" stroke="#948690" stroke-width="1" stroke-opacity="0.13"/><path d="M693.91 0 V905" stroke="#948690" stroke-width="1" stroke-opacity="0.13"/><path d="M724.08 0 V905" stroke="#948690" stroke-width="1" stroke-opacity="0.13"/><path d="M754.25 0 V905" stroke="#948690" stroke-width="1" stroke-opacity="0.13"/><path d="M784.42 0 V905" stroke="#948690" stroke-width="1" stroke-opacity="0.13"/><path d="M814.59 0 V905" stroke="#948690" stroke-width="1" stroke-opacity="0.13"/><path d="M844.76 0 V905" stroke="#948690" stroke-width="1" stroke-opacity="0.13"/><path d="M874.93 0 V905" stroke="#948690" stroke-width="1" stroke-opacity="0.13"/><path d="M905.10 0 V905" stroke="#948690" stroke-width="1" stroke-opacity="0.25"/><path d="M935.27 0 V905" stroke="#948690" stroke-width="1" stroke-opacity="0.13"/><path d="M965.44 0 V905" stroke="#948690" stroke-width="1" stroke-opacity="0.13"/><path d="M995.61 0 V905" stroke="#948690" stroke-width="1" stroke-opacity="0.13"/><path d="M1025.78 0 V905" stroke="#948690" stroke-width="1" stroke-opacity="0.13"/><path d="M1055.95 0 V905" stroke="#948690" stroke-width="1" stroke-opacity="0.13"/><path d="M1086.12 0 V905" stroke="#948690" stroke-width="1" stroke-opacity="0.13"/><path d="M1116.29 0 V905" stroke="#948690" stroke-width="1" stroke-opacity="0.13"/><path d="M1146.46 0 V905" stroke="#948690" stroke-width="1" stroke-opacity="0.13"/><path d="M0 0.00 H1162" stroke="#948690" stroke-width="1" stroke-opacity="0.25"/><path d="M0 30.17 H1162" stroke="#948690" stroke-width="1" stroke-opacity="0.13"/><path d="M0 60.34 H1162" stroke="#948690" stroke-width="1" stroke-opacity="0.13"/><path d="M0 90.51 H1162" stroke="#948690" stroke-width="1" stroke-opacity="0.13"/><path d="M0 120.68 H1162" stroke="#948690" stroke-width="1" stroke-opacity="0.13"/><path d="M0 150.85 H1162" stroke="#948690" stroke-width="1" stroke-opacity="0.13"/><path d="M0 181.02 H1162" stroke="#948690" stroke-width="1" stroke-opacity="0.13"/><path d="M0 211.19 H1162" stroke="#948690" stroke-width="1" stroke-opacity="0.13"/><path d="M0 241.36 H1162" stroke="#948690" stroke-width="1" stroke-opacity="0.13"/><path d="M0 271.53 H1162" stroke="#948690" stroke-width="1" stroke-opacity="0.13"/><path d="M0 301.70 H1162" stroke="#948690" stroke-width="1" stroke-opacity="0.25"/><path d="M0 331.87 H1162" stroke="#948690" stroke-width="1" stroke-opacity="0.13"/><path d="M0 362.04 H1162" stroke="#948690" stroke-width="1" stroke-opacity="0.13"/><path d="M0 392.21 H1162" stroke="#948690" stroke-width="1" stroke-opacity="0.13"/><path d="M0 422.38 H1162" stroke="#948690" stroke-width="1" stroke-opacity="0.13"/><path d="M0 452.55 H1162" stroke="#948690" stroke-width="1" stroke-opacity="0.13"/><path d="M0 482.72 H1162" stroke="#948690" stroke-width="1" stroke-opacity="0.13"/><path d="M0 512.89 H1162" stroke="#948690" stroke-width="1" stroke-opacity="0.13"/><path d="M0 543.06 H1162" stroke="#948690" stroke-width="1" stroke-opacity="0.13"/><path d="M0 573.23 H1162" stroke="#948690" stroke-width="1" stroke-opacity="0.13"/><path d="M0 603.40 H1162" stroke="#948690" stroke-width="1" stroke-opacity="0.25"/><path d="M0 633.57 H1162" stroke="#948690" stroke-width="1" stroke-opacity="0.13"/><path d="M0 663.74 H1162" stroke="#948690" stroke-width="1" stroke-opacity="0.13"/><path d="M0 693.91 H1162" stroke="#948690" stroke-width="1" stroke-opacity="0.13"/><path d="M0 724.08 H1162" stroke="#948690" stroke-width="1" stroke-opacity="0.13"/><path d="M0 754.25 H1162" stroke="#948690" stroke-width="1" stroke-opacity="0.13"/><path d="M0 784.42 H1162" stroke="#948690" stroke-width="1" stroke-opacity="0.13"/><path d="M0 814.59 H1162" stroke="#948690" stroke-width="1" stroke-opacity="0.13"/><path d="M0 844.76 H1162" stroke="#948690" stroke-width="1" stroke-opacity="0.13"/><path d="M0 874.93 H1162" stroke="#948690" stroke-width="1" stroke-opacity="0.13"/><path d="M0 905.10 H1162" stroke="#948690" stroke-width="1" stroke-opacity="0.25"/><path d="M2 5.5 L1157 5.8" stroke="#aab3b2" stroke-width="2.2"/><path d="M1.6 55 L1.8 902" fill="none" stroke="#7a8482" stroke-width="2"/><path d="M2 902 L1154 898" fill="none" stroke="#8d9695" stroke-width="2"/><path d="M1157.5 5.5 L1154 898" stroke="#aab2b1" stroke-width="2.2"/><path d="M0 6 V905 H1162 V0" fill="none" stroke="#0c1020" stroke-width="3"/><path d="M108.5 130 H124.0 V115" fill="none" stroke="#d6dde2" stroke-width="2.5"/><path d="M108.5 393.5 H124.0 V408.5" fill="none" stroke="#d6dde2" stroke-width="2.5"/><path d="M108.5 520 H124.0 V505" fill="none" stroke="#d6dde2" stroke-width="2.5"/><path d="M108.5 782.5 H124.0 V797.5" fill="none" stroke="#d6dde2" stroke-width="2.5"/><path d="M515 115 V130 H530.5" fill="none" stroke="#d6dde2" stroke-width="2.5"/><path d="M515 408.5 V393.5 H530.5" fill="none" stroke="#d6dde2" stroke-width="2.5"/><path d="M515 505 V520 H530.5" fill="none" stroke="#d6dde2" stroke-width="2.5"/><path d="M515 797.5 V782.5 H530.5" fill="none" stroke="#d6dde2" stroke-width="2.5"/><path d="M626 130 H641.5 V115" fill="none" stroke="#d6dde2" stroke-width="2.5"/><path d="M626 393.5 H641.5 V408.5" fill="none" stroke="#d6dde2" stroke-width="2.5"/><path d="M626 520 H641.5 V505" fill="none" stroke="#d6dde2" stroke-width="2.5"/><path d="M626 782.5 H641.5 V797.5" fill="none" stroke="#d6dde2" stroke-width="2.5"/><path d="M1032 115 V130 H1047.5" fill="none" stroke="#d6dde2" stroke-width="2.5"/><path d="M1032 408.5 V393.5 H1047.5" fill="none" stroke="#d6dde2" stroke-width="2.5"/><path d="M1032 505 V520 H1047.5" fill="none" stroke="#d6dde2" stroke-width="2.5"/><path d="M1032 797.5 V782.5 H1047.5" fill="none" stroke="#d6dde2" stroke-width="2.5"/></svg>
</div>
<div style="position:absolute;left:138px;top:917px;width:323px;height:243px;border-radius:8px;background:#f6f6f6;box-shadow:0 4px 16px rgba(0,0,0,0.17);overflow:hidden"><div style="position:absolute;left:0;top:0;width:323px;height:52px;background:#fff"></div></div>
<div class="t" style="left:159.0px;top:931.9px;font-size:24.3px;color:#262626;font-weight:normal;letter-spacing:0.45px;">Layer</div>
<svg style="position:absolute;left:412px;top:932px;" width="24" height="24" viewBox="0 0 24 24"><path d="M2.5 3.5 H21.5 M2.5 11.8 H11.5 M2.5 20.3 H21.5" stroke="#6a6a6a" stroke-width="2.2"/><path d="M21.5 7.5 V16.5 L14 12 Z" fill="#22b33a"/></svg>
<svg style="position:absolute;left:280px;top:1032px;" width="34" height="34" viewBox="0 0 34 34"><path d="M17 3 L30 10 L17 17 L4 10 Z" fill="none" stroke="#c9c9c9" stroke-width="1.7" stroke-linejoin="round"/><path d="M4 16.5 L17 23.5 L30 16.5 M4 23 L17 30 L30 23" fill="none" stroke="#c9c9c9" stroke-width="1.7" stroke-linejoin="round"/></svg>
<div class="t" style="left:197.5px;width:200px;text-align:center;top:1076.7px;font-size:16.5px;color:#bdbdbd;font-weight:normal;letter-spacing:0.4px;text-indent:0.4px;">No layer yet</div>
<div style="position:absolute;left:139px;top:1182px;width:148px;height:40px;background:#ebebeb;border-radius:20px;box-shadow:0 1px 3px rgba(0,0,0,0.04)"></div>
<div style="position:absolute;left:141px;top:1185px;width:34px;height:34px;background:#f1f1f1;border-radius:50%"></div>
<div style="position:absolute;left:250px;top:1185px;width:34px;height:34px;background:#f1f1f1;border-radius:50%"></div>
<div style="position:absolute;left:151px;top:1200.5px;width:14px;height:2px;background:#c4c4c4"></div>
<div style="position:absolute;left:260px;top:1200.5px;width:14.5px;height:2px;background:#c4c4c4"></div>
<div style="position:absolute;left:266.2px;top:1194.5px;width:2px;height:14.5px;background:#c4c4c4"></div>
<div class="t" style="left:187.5px;top:1193.2px;font-size:19.4px;color:#7b7b7b;font-weight:normal;letter-spacing:0.3px;">189%</div>
<div style="position:absolute;left:118px;top:1238px;width:1521px;height:42px;background:#f8f8fb;box-shadow:inset 0 1px 0 #ececee"></div>
<div style="position:absolute;left:118px;top:1239px;width:106px;height:41px;background:#e3e3e6"></div>
<div class="t" style="left:134.5px;top:1250.7px;font-size:19.4px;color:#2eb34b;font-weight:normal;letter-spacing:-0.45px;">Canvas1</div>
<div style="position:absolute;left:237px;top:1258.8px;width:15.5px;height:1.8px;background:#333"></div>
<div style="position:absolute;left:243.8px;top:1252px;width:1.8px;height:15.5px;background:#333"></div>
<div style="position:absolute;left:265px;top:1239px;width:1px;height:41px;background:#ececef"></div>
<div style="position:absolute;left:266px;top:1239px;width:1373px;height:41px;background:#fafafc"></div>
<div style="position:absolute;left:1639px;top:149px;width:409px;height:1131px;background:#fff"></div>
<div style="position:absolute;left:1639px;top:149px;width:1px;height:1131px;background:#e6e6e6"></div>
<div style="position:absolute;left:1665px;top:174px;width:357px;height:166px;border-radius:4px;background:#f7f7f7;overflow:hidden"><svg width="357" height="166" style="position:absolute;left:0;top:0"><path d="M192 0 H251 L287 37 L255 69 L226 40 Z" fill="#ededed"/><path d="M357 2 L193 166 H251 L357 59 Z" fill="#eeeeee"/><path d="M302 107 L357 162 V166 H344 L290 119 Z" fill="#ededed"/></svg></div>
<div class="t" style="left:1685.8px;top:200.5px;font-size:22.3px;color:#2a2a2a;font-weight:normal;letter-spacing:-0.15px;">xTool_M1</div>
<div style="position:absolute;left:1685px;top:234px;width:161px;height:35px;box-sizing:border-box;border:2px solid #2fba4f;border-radius:6px"></div>
<div class="t" style="left:1694.5px;top:242.6px;font-size:19.3px;color:#22b444;font-weight:normal;letter-spacing:0.63px;">Connect device</div>
<svg style="position:absolute;left:1872px;top:246px;" width="136" height="70" viewBox="0 0 136 70"><defs><linearGradient id="pb" x1="0" y1="0" x2="0" y2="1"><stop offset="0" stop-color="#ffffff"/><stop offset="1" stop-color="#f4f4f4"/></linearGradient></defs><path d="M10 3.5 Q11 2.5 13 2.5 H124 Q126 2.5 127 3.5 L130 16.5 H7 Z" fill="#3c3636"/><path d="M4 16.5 H131 V63 Q131 65 129 65 H6 Q4 65 4 63 Z" fill="url(#pb)"/><path d="M127 17 H131 V64 H127 Z" fill="#e6e6e6"/><path d="M6 64.5 H130" stroke="#d2d2d2" stroke-width="1.2"/><circle cx="116" cy="24.5" r="2" fill="none" stroke="#8fd0e8" stroke-width="1"/><text x="14" y="59" font-family="Liberation Sans" font-size="4.5" fill="#888">xTOOL</text></svg>
<div style="position:absolute;left:1666px;top:367px;width:356px;height:54px;box-sizing:border-box;border:1px solid #d6d6d6;border-radius:6px;background:#fff"></div>
<svg style="position:absolute;left:1685px;top:375px;" width="40" height="38" viewBox="0 0 40 38"><defs><linearGradient id="lz" x1="0" y1="0" x2="0" y2="1"><stop offset="0" stop-color="#8fe09a"/><stop offset="1" stop-color="#14b02a"/></linearGradient></defs><path d="M3.5 33.5 L9.5 25.3 H29 L35 33.5 Z" fill="#ececec" stroke="#6e6e6e" stroke-width="1.4" stroke-linejoin="round"/><rect x="17.5" y="2.5" width="4" height="16" rx="2" fill="url(#lz)"/><path d="M11.5 14 L15 18 M27.5 14 L24 18 M5 18.5 L12.5 20.5 M33.5 18.5 L26 20.5" stroke="#2dbb46" stroke-width="1.6" stroke-linecap="round"/></svg>
<div class="t" style="left:1735.8px;top:381.8px;font-size:22.9px;color:#262626;font-weight:normal;letter-spacing:0.15px;">Laser flat</div>
<svg style="position:absolute;left:1985px;top:388px;" width="20" height="12" viewBox="0 0 20 12"><path d="M2 2 L10 9.5 L18 2" fill="none" stroke="#bdbdbd" stroke-width="1.6"/></svg>
<div class="t" style="left:1666.5px;top:448.3px;font-size:21.4px;color:#717575;font-weight:normal;letter-spacing:0.75px;">Material</div>
<div style="position:absolute;left:1666px;top:482px;width:356px;height:44px;box-sizing:border-box;border:1px solid #d6d6d6;border-radius:6px;background:#fff"></div>
<div class="t" style="left:1685.5px;top:493.8px;font-size:21.4px;color:#262626;font-weight:normal;letter-spacing:0.95px;">User-defined material</div>
<svg style="position:absolute;left:1985px;top:498px;" width="20" height="12" viewBox="0 0 20 12"><path d="M2 2 L10 9.5 L18 2" fill="none" stroke="#bdbdbd" stroke-width="1.6"/></svg>
<div class="t" style="left:1666.5px;top:554.1px;font-size:21.4px;color:#717575;font-weight:normal;letter-spacing:0.85px;">Thickness</div>
<div class="t" style="left:1771.5px;top:556.6px;font-size:18.5px;color:#717575;font-weight:normal;letter-spacing:0.9px;">(mm)</div>
<div style="position:absolute;left:1666px;top:588px;width:299px;height:44px;box-sizing:border-box;border:1px solid #d6d6d6;border-radius:6px;background:#fff"></div>
<div style="position:absolute;left:1978px;top:588px;width:44px;height:44px;box-sizing:border-box;border:1px solid #e8e8e8;border-radius:6px;background:#fff"></div>
<svg style="position:absolute;left:1988px;top:598px;" width="24" height="24" viewBox="0 0 24 24"><g transform="rotate(-45 12 12)"><rect x="2" y="8.5" width="20" height="7" rx="1" fill="none" stroke="#7a7a7a" stroke-width="1.6"/><path d="M6 8.5 V11.5 M9.3 8.5 V11 M12.6 8.5 V11.5 M15.9 8.5 V11 M19 8.5 V11" stroke="#7a7a7a" stroke-width="1.1"/></g></svg>
<div class="t" style="left:1666.5px;top:660.0px;font-size:21.4px;color:#717575;font-weight:normal;letter-spacing:0.93px;">Height raised</div>
<div style="position:absolute;left:1666px;top:694px;width:356px;height:43px;box-sizing:border-box;border:1px solid #d6d6d6;border-radius:6px;background:#fff"></div>
<div class="t" style="left:1685.5px;top:706.0px;font-size:21.4px;color:#262626;font-weight:normal;letter-spacing:0.3px;">No</div>
<svg style="position:absolute;left:1985px;top:710px;" width="20" height="12" viewBox="0 0 20 12"><path d="M2 2 L10 9.5 L18 2" fill="none" stroke="#bdbdbd" stroke-width="1.6"/></svg>
<div class="t" style="left:1666.5px;top:765.7px;font-size:21.4px;color:#717575;font-weight:normal;letter-spacing:0.88px;">Processing path</div>
<div style="position:absolute;left:1666px;top:799px;width:356px;height:44px;box-sizing:border-box;border:1px solid #d6d6d6;border-radius:6px;background:#fff"></div>
<div class="t" style="left:1686.3px;top:811.8px;font-size:21.4px;color:#262626;font-weight:normal;letter-spacing:0.88px;">Auto planning</div>
<svg style="position:absolute;left:1985px;top:815px;" width="20" height="12" viewBox="0 0 20 12"><path d="M2 2 L10 9.5 L18 2" fill="none" stroke="#bdbdbd" stroke-width="1.6"/></svg>
<div style="position:absolute;left:1666px;top:1133px;width:356px;height:54px;box-sizing:border-box;border:1px solid #e6e6e6;border-radius:6px;background:#fff"></div>
<div style="position:absolute;left:1967px;top:1134px;width:1px;height:52px;background:#ececec"></div>
<div class="t" style="left:1717.0px;width:200px;text-align:center;top:1149.8px;font-size:22.6px;color:#9b9b9b;font-weight:normal;letter-spacing:0.3px;text-indent:0.3px;">Framing</div>
<svg style="position:absolute;left:1975px;top:1140px;" width="40" height="40" viewBox="0 0 40 40"><g fill="none" stroke="#959595"><circle cx="20" cy="19.7" r="8.4" stroke-width="2.9"/><path d="M20 9.2 V7.6" stroke-width="4.6" stroke-linecap="round" transform="rotate(0 20 19.7)"/><path d="M20 9.2 V7.6" stroke-width="4.6" stroke-linecap="round" transform="rotate(45 20 19.7)"/><path d="M20 9.2 V7.6" stroke-width="4.6" stroke-linecap="round" transform="rotate(90 20 19.7)"/><path d="M20 9.2 V7.6" stroke-width="4.6" stroke-linecap="round" transform="rotate(135 20 19.7)"/><path d="M20 9.2 V7.6" stroke-width="4.6" stroke-linecap="round" transform="rotate(180 20 19.7)"/><path d="M20 9.2 V7.6" stroke-width="4.6" stroke-linecap="round" transform="rotate(225 20 19.7)"/><path d="M20 9.2 V7.6" stroke-width="4.6" stroke-linecap="round" transform="rotate(270 20 19.7)"/><path d="M20 9.2 V7.6" stroke-width="4.6" stroke-linecap="round" transform="rotate(315 20 19.7)"/></g><circle cx="20" cy="19.7" r="3.1" fill="#959595"/></svg>
<div style="position:absolute;left:1666px;top:1200px;width:356px;height:54px;background:#0aab2a;border-radius:6px"></div>
<svg style="position:absolute;left:1781px;top:1211px;" width="33" height="33" viewBox="0 0 33 33"><circle cx="16.5" cy="16.5" r="13.5" fill="none" stroke="#fff" stroke-width="2.2"/><path d="M12.5 9.5 V23.5 L23.5 16.5 Z" fill="#fff"/></svg>
<div class="t" style="left:1822.5px;top:1216.1px;font-size:22.7px;color:#ffffff;font-weight:normal;letter-spacing:0.0px;-webkit-text-stroke:0.45px #fff;">Process</div>
<svg style="position:absolute;left:1410px;top:0px;" width="44" height="40" viewBox="0 0 44 40"><path d="M21.5 15.5 A8.7 8.7 0 0 1 39 17.5" fill="none" stroke="#eee" stroke-width="2.3"/><path d="M23 13.5 A6 6 0 0 1 33 17 L28 21 Z" fill="#e8e8e8"/><circle cx="17.8" cy="22.3" r="7.6" fill="none" stroke="#eee" stroke-width="2.3"/><path d="M14 18 A5 5 0 0 1 23 21 L19 27 Q15 26 14 22 Z" fill="#e8e8e8"/><path d="M17.5 20 L22.5 27" stroke="#0b0b0b" stroke-width="1.6"/><circle cx="33.8" cy="25.2" r="8.6" fill="#0b0b0b"/><circle cx="33.8" cy="25.2" r="7.2" fill="#f04a12"/></svg>
<svg style="position:absolute;left:1479px;top:4px;" width="32" height="30" viewBox="0 0 32 30"><path d="M3 9 H9 L11 6 H19 L21 9 H25 V23 H3 Z" fill="#5a5a5a"/><circle cx="14" cy="15" r="4" fill="#3a3a3a" stroke="#777" stroke-width="1"/><rect x="11" y="15" width="17.5" height="12" rx="1" fill="#3b7fd1" stroke="#222" stroke-width="0.8"/><rect x="17" y="27" width="6" height="2" fill="#ccc"/></svg>
<svg style="position:absolute;left:1531px;top:7px;" width="46" height="24" viewBox="0 0 46 24"><rect x="3" y="3.5" width="35" height="17" rx="4.5" fill="none" stroke="#bdbdbd" stroke-width="1.8"/><rect x="6" y="6.5" width="29" height="11" rx="2" fill="#e6e6e6"/><path d="M40.5 9.5 Q43 12 40.5 14.5" fill="#9a9a9a" stroke="#9a9a9a" stroke-width="1.5"/><path d="M24 2 L15 13 H21 L17.5 22 L27 11 H21 Z" fill="#111" stroke="#111" stroke-width="1.5"/><path d="M23 4 L16.5 12 H22 L18.5 20 L25.5 12 H20.5 Z" fill="#eee"/></svg>
<svg style="position:absolute;left:1601px;top:8px;" width="30" height="22" viewBox="0 0 30 22"><path d="M2.5 8.5 A17 17 0 0 1 27.5 8.5" fill="none" stroke="#f0f0f0" stroke-width="2.8" stroke-linecap="round"/><path d="M7 13 A11 11 0 0 1 23 13" fill="none" stroke="#f0f0f0" stroke-width="2.8" stroke-linecap="round"/><path d="M11.5 17.5 A5 5 0 0 1 18.5 17.5 L15 21 Z" fill="#f0f0f0" stroke="#f0f0f0" stroke-width="1.5" stroke-linejoin="round"/></svg>
<svg style="position:absolute;left:1657px;top:10px;" width="26" height="22" viewBox="0 0 26 22"><circle cx="10.5" cy="9.5" r="6.3" fill="none" stroke="#f0f0f0" stroke-width="2.4"/><path d="M15 14 L21 20" stroke="#f0f0f0" stroke-width="2.6" stroke-linecap="round"/></svg>
<svg style="position:absolute;left:1708px;top:7px;" width="28" height="26" viewBox="0 0 28 26"><rect x="3.5" y="3.5" width="20" height="8" rx="4" fill="none" stroke="#eee" stroke-width="1.8"/><circle cx="7.5" cy="7.5" r="2.2" fill="#eee"/><rect x="2.5" y="13.5" width="22" height="10" rx="5" fill="#eee"/><circle cx="19.5" cy="18.5" r="3" fill="#111"/></svg>
<svg style="position:absolute;left:1756px;top:4px;" width="30" height="30" viewBox="0 0 30 30"><defs><clipPath id="sc"><circle cx="15" cy="15.2" r="10.8"/></clipPath><filter id="sb" x="-50%" y="-50%" width="200%" height="200%"><feGaussianBlur stdDeviation="2.2"/></filter><filter id="sb2" x="-50%" y="-50%" width="200%" height="200%"><feGaussianBlur stdDeviation="0.6"/></filter></defs><g clip-path="url(#sc)"><rect x="0" y="0" width="30" height="30" fill="#1a1440"/><circle cx="16" cy="8" r="6" fill="#e040a0" filter="url(#sb)"/><circle cx="8" cy="19" r="6" fill="#3a70e0" filter="url(#sb)"/><circle cx="23" cy="17" r="5" fill="#30b0a0" filter="url(#sb)"/><circle cx="15" cy="22" r="4" fill="#5050d0" filter="url(#sb)"/><g filter="url(#sb2)" stroke-linecap="round"><path d="M9 23 L15 13.5 L20 17" fill="none" stroke="#bff0ff" stroke-width="1.6"/><path d="M15 13.5 L17.5 24" stroke="#e8d0ff" stroke-width="1.3"/><path d="M15.5 14 L24 13" stroke="#a0fff0" stroke-width="1.1"/></g></g></svg>
<svg style="position:absolute;left:0px;top:1264px;" width="16" height="16" viewBox="0 0 16 16"><path d="M0 0 A16 16 0 0 0 16 16 H0 Z" fill="#0b0b0b"/></svg>
<svg style="position:absolute;left:2032px;top:1264px;" width="16" height="16" viewBox="0 0 16 16"><path d="M16 0 A16 16 0 0 1 0 16 H16 Z" fill="#0b0b0b"/></svg>
</body></html>
